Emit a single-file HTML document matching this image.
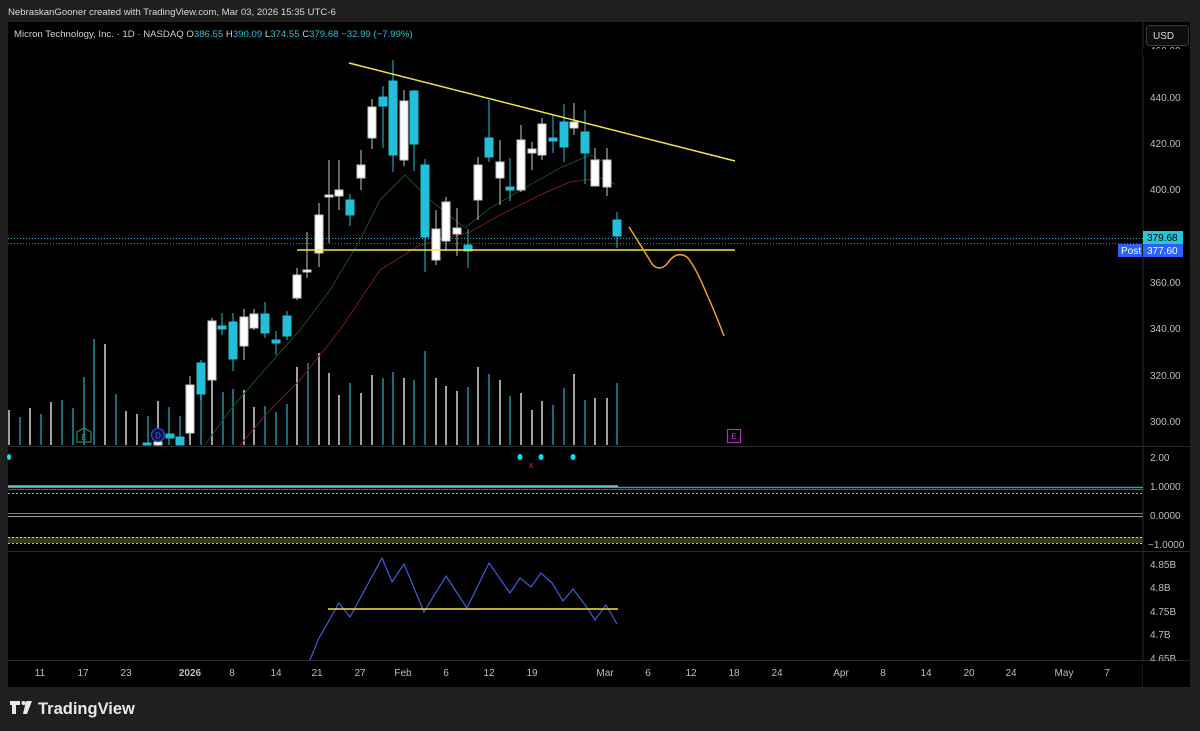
<!DOCTYPE html>
<html><head><meta charset="utf-8"><style>
html,body{margin:0;padding:0;background:#1f1f1f;width:1200px;height:731px;overflow:hidden;font-family:"Liberation Sans",sans-serif}
svg{display:block}
</style></head><body>
<svg width="1200" height="731" viewBox="0 0 1200 731" xmlns="http://www.w3.org/2000/svg" font-family="Liberation Sans, sans-serif">
<rect width="1200" height="731" fill="#1f1f1f"/>
<text x="8" y="15" fill="#d8d8d8" font-size="9.6">NebraskanGooner created with TradingView.com, Mar 03, 2026 15:35 UTC-6</text>
<rect x="8" y="22" width="1182" height="665" fill="#000"/>
<!-- separators -->
<line x1="1143" y1="22" x2="1143" y2="687" stroke="#2a2a2a"/>
<line x1="8" y1="446.5" x2="1190" y2="446.5" stroke="#2a2a2a"/>
<line x1="8" y1="551.5" x2="1190" y2="551.5" stroke="#2a2a2a"/>
<line x1="8" y1="660.5" x2="1190" y2="660.5" stroke="#2a2a2a"/>
<!-- legend -->
<text x="14" y="37" font-size="9.6" fill="#cfcfcf">Micron Technology, Inc. · 1D · NASDAQ <tspan fill="#cfcfcf">O</tspan><tspan fill="#22c0d0">386.55</tspan> <tspan fill="#cfcfcf">H</tspan><tspan fill="#22c0d0">390.09</tspan> <tspan fill="#cfcfcf">L</tspan><tspan fill="#22c0d0">374.55</tspan> <tspan fill="#cfcfcf">C</tspan><tspan fill="#22c0d0">379.68</tspan> <tspan fill="#22c0d0">−32.99 (−7.99%)</tspan></text>
<!-- USD -->
<rect x="1146.5" y="25.5" width="42" height="20" rx="3" fill="#0d0d0d" stroke="#3a3a3a"/>
<text x="1153" y="39" font-size="10" fill="#ddd">USD</text>
<!-- price axis -->
<g font-size="10" fill="#bdbdbd">
<text x="1150" y="54">460.00</text>
<text x="1150" y="101">440.00</text>
<text x="1150" y="147">420.00</text>
<text x="1150" y="193">400.00</text>
<text x="1150" y="286">360.00</text>
<text x="1150" y="332">340.00</text>
<text x="1150" y="379">320.00</text>
<text x="1150" y="425">300.00</text>
<text x="1150" y="461">2.00</text>
<text x="1150" y="490">1.0000</text>
<text x="1150" y="519">0.0000</text>
<text x="1148" y="548">−1.0000</text>
<text x="1150" y="568">4.85B</text>
<text x="1150" y="591">4.8B</text>
<text x="1150" y="615">4.75B</text>
<text x="1150" y="638">4.7B</text>
<text x="1150" y="662">4.65B</text>
</g>
<rect x="1143" y="49" width="47" height="7" fill="#000"/>
<rect x="1143" y="661" width="47" height="26" fill="#000"/>
<!-- time axis -->
<g font-size="10" fill="#bdbdbd" text-anchor="middle">
<text x="40" y="676">11</text><text x="83" y="676">17</text><text x="126" y="676">23</text>
<text x="190" y="676" font-weight="bold">2026</text><text x="232" y="676">8</text><text x="276" y="676">14</text>
<text x="317" y="676">21</text><text x="360" y="676">27</text><text x="403" y="676">Feb</text>
<text x="446" y="676">6</text><text x="489" y="676">12</text><text x="532" y="676">19</text>
<text x="605" y="676">Mar</text><text x="648" y="676">6</text><text x="691" y="676">12</text>
<text x="734" y="676">18</text><text x="777" y="676">24</text><text x="841" y="676">Apr</text>
<text x="883" y="676">8</text><text x="926" y="676">14</text><text x="969" y="676">20</text>
<text x="1011" y="676">24</text><text x="1064" y="676">May</text><text x="1107" y="676">7</text>
</g>
<!-- volume -->
<g stroke-width="1.6">
<path stroke="#c8c8c8" d="M9 445V410M30 445V408M51 445V402M105 445V344M126 445V411M137 445V414M158 445V401M190 445V385M212 445V375M244 445V390M254 445V407M297 445V367M319 445V353M329 445V373M339 445V395M361 445V393M372 445V375M404 445V378M436 445V378M446 445V386M457 445V391M478 445V367M500 445V380M521 445V393M532 445V410M542 445V401M574 445V374M595 445V398M607 445V398"/>
<path stroke="#1f8595" d="M20 445V417M41 445V414M62 445V400M73 445V408M84 445V377M94 445V339M116 445V394M148 445V416M169 445V407M180 445V416M201 445V393M223 445V392M233 445V389M265 445V406M276 445V412M287 445V404M308 445V363M350 445V383M383 445V378M393 445V372M414 445V380M425 445V351M468 445V387M489 445V374M510 445V396M553 445V405M564 445V388M585 445V400M617 445V383"/>
</g>
<!-- MAs -->
<polyline fill="none" stroke="#174d1a" stroke-width="1" points="205,445 230,410 260,375 300,330 330,290 360,240 380,200 405,175 430,200 465,228 490,208 530,185 560,168 590,155 610,165"/>
<polyline fill="none" stroke="#7a1818" stroke-width="1" points="240,445 270,410 300,380 340,330 380,270 420,245 470,232 500,215 540,195 570,182 600,178 615,184"/>
<!-- price lines -->
<line x1="8" y1="238.5" x2="1143" y2="238.5" stroke="#22b8c8" stroke-dasharray="1,2"/>
<line x1="8" y1="243.5" x2="1143" y2="243.5" stroke="#4a5fd0" stroke-dasharray="1,2"/>
<!-- candles -->
<g stroke-width="1">
<g stroke="#c8c8c8" fill="#fff">
<path d="M158 438V446M190 376V445M212 318V385M244 309V360M254 309V330M297 268V300M307 232V278M319 203V267M329 160V243M339 160V210M361 150V190M372 99V149M404 90V166M436 210V265M446 197V251M457 208V256M478 157V220M500 140V205M521 125V192M532 142V170M542 118V160M574 103V135M595 148V186M607 148V196"/>
<rect x="154" y="442" width="8" height="3"/><rect x="186" y="385" width="8" height="48"/><rect x="208" y="321" width="8" height="59"/>
<rect x="240" y="317" width="8" height="29"/><rect x="250" y="314" width="8" height="14"/><rect x="293" y="275" width="8" height="23"/>
<rect x="303" y="270" width="8" height="2"/><rect x="315" y="215" width="8" height="38"/><rect x="325" y="195" width="8" height="2"/>
<rect x="335" y="190" width="8" height="6"/><rect x="357" y="165" width="8" height="13"/><rect x="368" y="107" width="8" height="31"/>
<rect x="400" y="101" width="8" height="59"/><rect x="432" y="229" width="8" height="31"/><rect x="442" y="202" width="8" height="39"/>
<rect x="453" y="228" width="8" height="6"/><rect x="474" y="165" width="8" height="35"/><rect x="496" y="162" width="8" height="16"/>
<rect x="517" y="140" width="8" height="50"/><rect x="528" y="149" width="8" height="4"/><rect x="538" y="124" width="8" height="31"/>
<rect x="570" y="122" width="8" height="6"/><rect x="591" y="160" width="8" height="26"/><rect x="603" y="160" width="8" height="27"/>
</g>
<g stroke="#22c0d8" fill="#22c0d8">
<path d="M201 360V400M222 313V335M233 313V371M265 302V338M276 331V355M287 311V340M350 194V226M383 86V148M393 60V172M414 90V171M425 159V272M468 229V268M489 100V162M510 158V201M553 115V153M564 104V162M585 110V184M617 212V248"/>
<rect x="143" y="443" width="8" height="2"/><rect x="166" y="434" width="8" height="4"/><rect x="176" y="437" width="8" height="8"/>
<rect x="197" y="363" width="8" height="31"/><rect x="218" y="326" width="8" height="3"/><rect x="229" y="322" width="8" height="37"/>
<rect x="261" y="314" width="8" height="19"/><rect x="272" y="340" width="8" height="3"/><rect x="283" y="316" width="8" height="20"/>
<rect x="346" y="200" width="8" height="15"/><rect x="379" y="97" width="8" height="9"/><rect x="389" y="81" width="8" height="74"/>
<rect x="410" y="91" width="8" height="53"/><rect x="421" y="165" width="8" height="72"/><rect x="464" y="245" width="8" height="6"/>
<rect x="485" y="138" width="8" height="19"/><rect x="506" y="187" width="8" height="3"/><rect x="549" y="138" width="8" height="3"/>
<rect x="560" y="122" width="8" height="25"/><rect x="581" y="132" width="8" height="21"/><rect x="613" y="220" width="8" height="16"/>
</g>
</g>
<!-- drawings -->
<line x1="349" y1="63" x2="735" y2="161" stroke="#f5e342" stroke-width="1.5"/>
<line x1="297" y1="250" x2="735" y2="250" stroke="#f5e342" stroke-width="1.5"/>
<path d="M629 227 Q645 252 652 264 Q659 272 667 264 Q676 250 687 257 Q695 266 705 290 Q715 312 724 336" fill="none" stroke="#f0a020" stroke-width="1.5"/>
<!-- price labels -->
<rect x="1143" y="231" width="40" height="13" fill="#22c6d6"/>
<text x="1147" y="241" font-size="10" fill="#000">379.68</text>
<rect x="1118" y="244" width="24" height="13" fill="#2962ff"/>
<text x="1121" y="254" font-size="10" fill="#fff">Post</text>
<rect x="1143" y="244" width="40" height="13" fill="#2962ff"/>
<text x="1147" y="254" font-size="10" fill="#fff">377.60</text>
<!-- markers -->
<path d="M84 428 L91 432 V442 H77 V432 Z" fill="none" stroke="#1f8a6a" stroke-width="1.2"/>
<text x="84" y="440" font-size="8" fill="#1f8a6a" text-anchor="middle">E</text>
<circle cx="158" cy="435" r="6.5" fill="#0a1240" stroke="#2a50d0" stroke-width="1.3"/>
<text x="158" y="438.5" font-size="8" fill="#4a6ae0" text-anchor="middle">D</text>
<rect x="727.5" y="429.5" width="13" height="13" fill="none" stroke="#b030c0" stroke-width="1.2"/>
<text x="734" y="439" font-size="8" fill="#c040d0" text-anchor="middle">E</text>
<!-- indicator 1 -->
<g fill="#00e5f5"><ellipse cx="9" cy="457" rx="2" ry="3"/><ellipse cx="520" cy="457" rx="2.5" ry="3"/><ellipse cx="541" cy="457" rx="2.5" ry="3"/><ellipse cx="573" cy="457" rx="2.5" ry="3"/></g>
<text x="531" y="468" font-size="9" fill="#e02020" text-anchor="middle">x</text>
<line x1="8" y1="486.5" x2="618" y2="486.5" stroke="#5fc8d0" stroke-width="2.5"/>
<line x1="618" y1="487.5" x2="1143" y2="487.5" stroke="#2aa0b0" stroke-width="1.5"/>
<line x1="8" y1="489.5" x2="1143" y2="489.5" stroke="#1a7080" stroke-width="1"/>
<line x1="8" y1="493.5" x2="1143" y2="493.5" stroke="#5fc8d0" stroke-dasharray="2,2"/>
<line x1="8" y1="513.5" x2="1143" y2="513.5" stroke="#7a7a7a" stroke-width="1"/>
<line x1="8" y1="516.5" x2="1143" y2="516.5" stroke="#9a9a9a" stroke-width="1"/>
<rect x="8" y="537" width="1135" height="6" fill="#3a3a14"/>
<line x1="8" y1="537.5" x2="1143" y2="537.5" stroke="#d8d040" stroke-dasharray="2,2"/>
<line x1="8" y1="543.5" x2="1143" y2="543.5" stroke="#d8d040" stroke-dasharray="2,2"/>
<!-- indicator 2 -->
<polyline fill="none" stroke="#3a5fd8" stroke-width="1.2" points="310,660 318,640 339,603 350,617 382,558 392,582 404,564 424,612 446,576 467,608 489,563 510,593 520,578 531,587 541,573 552,583 563,601 573,589 586,606 595,620 606,605 617,624"/>
<line x1="328" y1="609" x2="618" y2="609" stroke="#f5e342" stroke-width="1.5"/>
<!-- logo -->
<g fill="#e8e8e8">
<path d="M10 701h10v4h-4v9h-4v-9h-2z"/>
<circle cx="23.5" cy="703" r="2"/>
<path d="M26 701h6l-5 13h-4z"/>
</g>
<text x="38" y="714" font-size="16.5" font-weight="bold" fill="#e8e8e8">TradingView</text>
</svg>
</body></html>
